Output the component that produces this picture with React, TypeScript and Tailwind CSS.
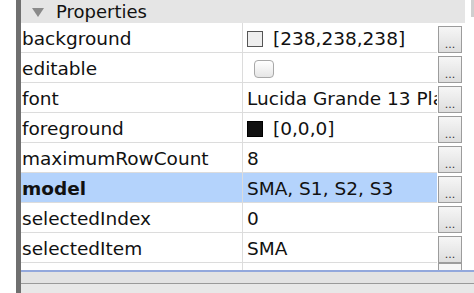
import React from 'react';

type Row = {
  name: string;
  value: string;
  swatch?: 'light' | 'dark';
  checkbox?: boolean;
  selected?: boolean;
};

const rows: Row[] = [
  { name: 'background', value: '[238,238,238]', swatch: 'light' },
  { name: 'editable', value: '', checkbox: true },
  { name: 'font', value: 'Lucida Grande 13 Plain' },
  { name: 'foreground', value: '[0,0,0]', swatch: 'dark' },
  { name: 'maximumRowCount', value: '8' },
  { name: 'model', value: 'SMA, S1, S2, S3', selected: true },
  { name: 'selectedIndex', value: '0' },
  { name: 'selectedItem', value: 'SMA' },
];

const DotsButton = () => (
  <div className="w-[24px] h-[27px] border border-[#9c9c9c] bg-gradient-to-b from-[#f6f6f6] to-[#dedede] flex items-end justify-center pb-[2px] text-[11px] leading-none text-[#333]">
    ...
  </div>
);

export default function App() {
  return (
    <div
      className="w-[474px] h-[293px] flex bg-white overflow-hidden text-[#111]"
      style={{ fontFamily: '"DejaVu Sans", Verdana, sans-serif' }}
    >
      <div className="w-[16px] shrink-0 bg-white" />
      <div className="w-[5px] shrink-0 bg-[#6f6f6f]" />
      <div className="flex-1 min-w-0 flex flex-col">
        <div className="flex h-[263px]">
          <div className="flex-1 min-w-0 flex flex-col">
            <div className="h-[23px] bg-[#e5e5e5] flex items-center">
              <svg width="12" height="9" viewBox="0 0 12 9" className="ml-[11px] mt-[1px]">
                <polygon points="0,0 12,0 6,9" fill="#8a8a8a" />
              </svg>
              <span className="ml-[12px] text-[18px] leading-none">Properties</span>
            </div>
            {rows.map((r) => (
              <div key={r.name} className="flex h-[30px]">
                <div
                  className={`w-[222px] shrink-0 border-r border-b border-[#dcdcdc] flex items-center pl-[1px] pt-[3px] text-[18.5px] whitespace-nowrap ${
                    r.selected ? 'bg-[#b4d3fc] font-bold' : ''
                  }`}
                >
                  {r.name}
                </div>
                <div
                  className={`flex-1 min-w-0 overflow-hidden border-b border-[#dcdcdc] flex items-center pl-[4px] pt-[3px] text-[18.5px] whitespace-nowrap ${
                    r.selected ? 'bg-[#b4d3fc]' : ''
                  }`}
                >
                  {r.swatch && (
                    <span
                      className={`inline-block w-[16px] h-[16px] mr-[10px] shrink-0 border ${
                        r.swatch === 'light'
                          ? 'border-[#555] bg-[#eeeeee]'
                          : 'border-black bg-[#111]'
                      }`}
                    />
                  )}
                  {r.checkbox && (
                    <span className="inline-block ml-[7px] w-[20px] h-[18px] rounded-[4px] border border-[#a8a8a8] bg-gradient-to-b from-white to-[#e6e6e6]" />
                  )}
                  {r.value}
                </div>
                <div className="w-[28px] shrink-0 flex items-end pl-[1px]">
                  <DotsButton />
                </div>
              </div>
            ))}
          </div>
          <div className="w-[9px] shrink-0 flex justify-end">
            <div className="w-[3px] h-[17px] bg-[#cfcfcf]" />
          </div>
        </div>
        <div className="h-[7px] flex">
          <div className="w-[222px] shrink-0 border-r border-[#dcdcdc]" />
          <div className="flex-1" />
          <div className="w-[28px] shrink-0 pl-[1px] mr-[9px]">
            <div className="w-[24px] h-[7px] border border-b-0 border-[#9c9c9c] bg-[#f6f6f6]" />
          </div>
        </div>
        <div className="h-[2px] bg-[#93a8dc]" />
        <div className="h-[11px] bg-[#e3e3e3]" />
        <div className="h-[1px] bg-[#9a9a9a]" />
        <div className="flex-1 bg-[#e8e8e8]" />
      </div>
    </div>
  );
}
